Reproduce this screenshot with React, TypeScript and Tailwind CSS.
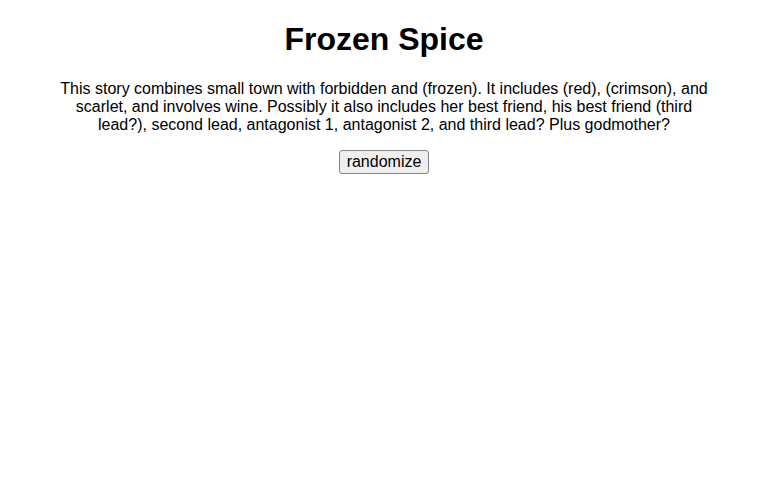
import React from "react";

const App = () => {
  return (
    <div className="min-h-screen bg-white px-2 py-px text-center text-black font-['Liberation_Sans',Arial,sans-serif]">
      <h1 className="mt-[20.44px] mb-[21.44px] text-[32px] font-bold leading-[normal]">Frozen Spice</h1>
      <p className="mx-auto my-4 max-w-[660px] text-base leading-[normal]">
        This story combines small town with forbidden and (frozen). It includes (red), (crimson), and
        scarlet, and involves wine. Possibly it also includes her best friend, his best friend (third
        lead?), second lead, antagonist 1, antagonist 2, and third lead? Plus godmother?
      </p>
      <button className="rounded-[3px] border border-[#858585] bg-[#efefef] px-[7px] py-[2px] text-base leading-[normal] text-black">
        randomize
      </button>
    </div>
  );
};

export default App;
